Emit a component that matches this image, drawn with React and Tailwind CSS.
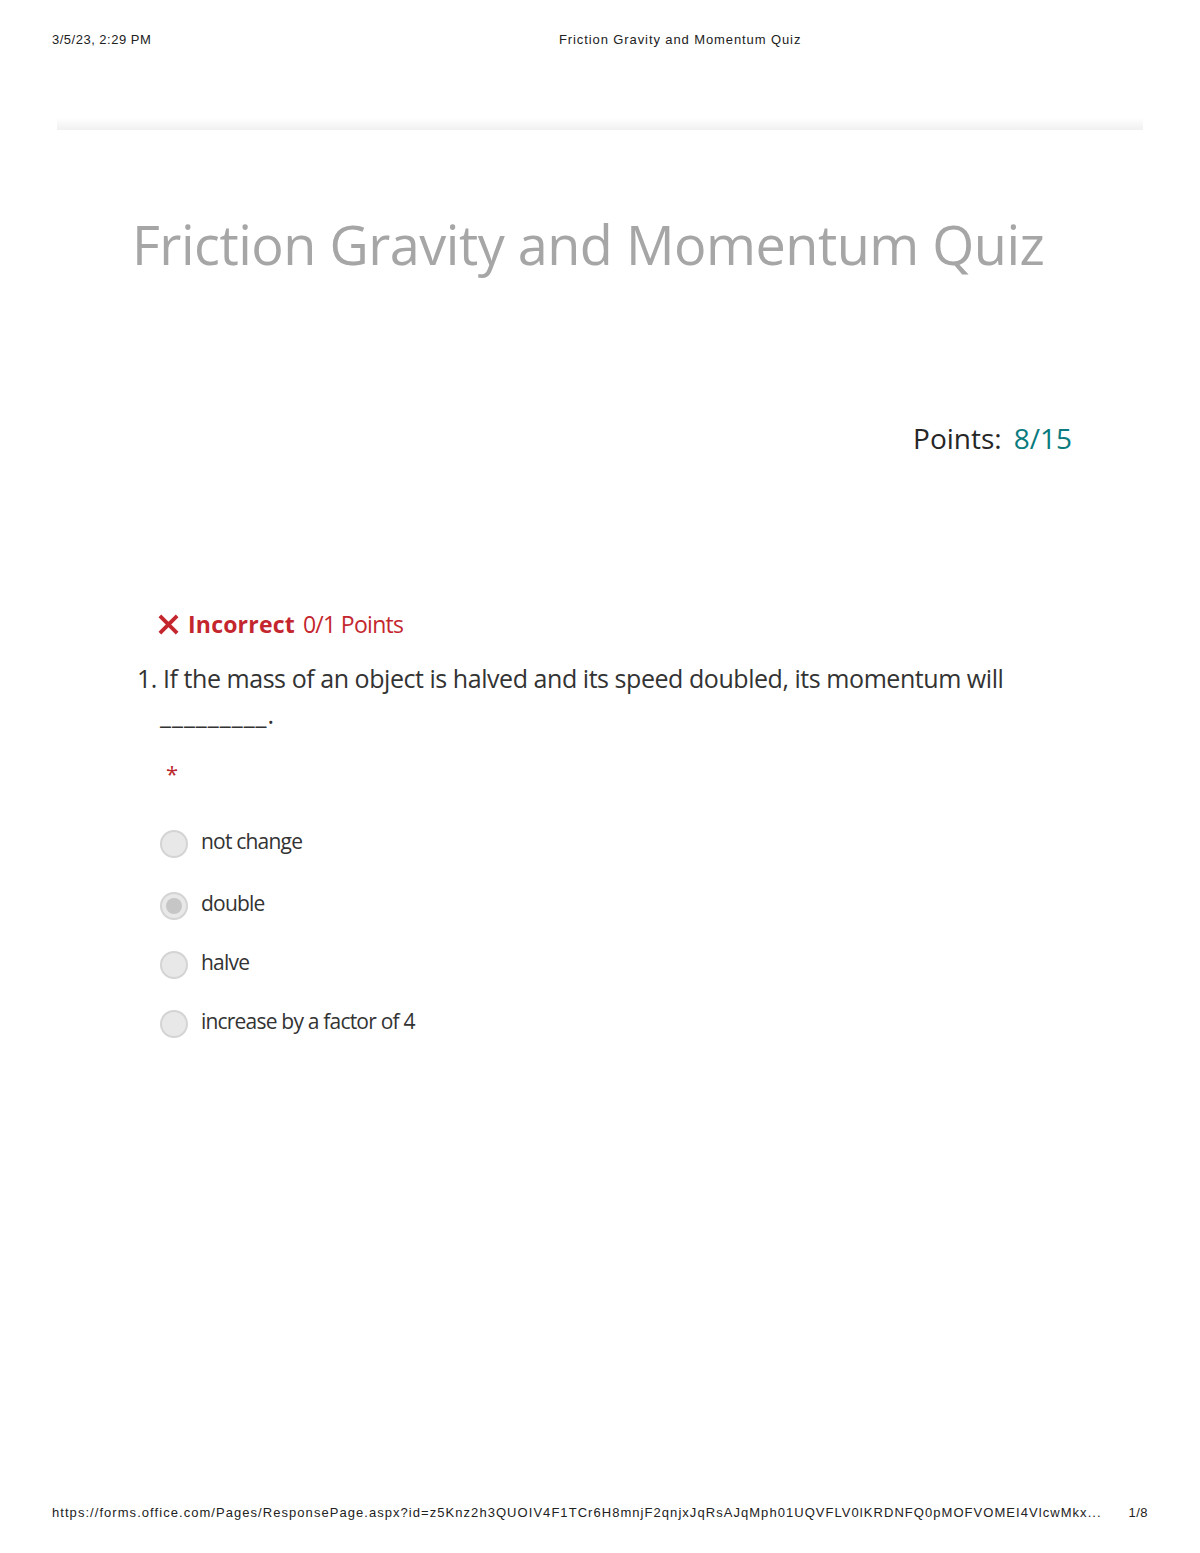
import React from 'react';

const options = [
  { label: 'not change', selected: false },
  { label: 'double', selected: true },
  { label: 'halve', selected: false },
  { label: 'increase by a factor of 4', selected: false },
];

const Radio = ({ selected }) => (
  <span className="w-[28px] h-[28px] rounded-full border-2 border-[#d4d4d4] bg-[#e8e8e8] flex items-center justify-center shrink-0">
    {selected && <span className="w-[16px] h-[16px] rounded-full bg-[#c6c6c6]" />}
  </span>
);

const App = () => {
  return (
    <div className="w-[1200px] h-[1553px] bg-white flex flex-col text-[#333] font-['Open_Sans',sans-serif]">
      <div className="flex items-center h-[80px] px-[52px] text-[13px] text-[#222] font-['Liberation_Sans',sans-serif] tracking-[0.5px]">
        <span className="w-[507px]">3/5/23, 2:29 PM</span>
        <span className="tracking-[0.9px]">Friction Gravity and Momentum Quiz</span>
      </div>

      <div className="mx-[57px] mt-[38px] h-[12px] bg-gradient-to-b from-white to-[#f0f0f0]" />

      <div className="flex-1 flex flex-col">
        <h1 className="pl-[132px] mt-[78px] text-[54px] leading-[72px] text-[#a6a6a6] tracking-[-0.5px]">
          Friction Gravity and Momentum Quiz
        </h1>

        <div className="flex justify-end pr-[128px] mt-[138px] text-[28px] leading-[40px]">
          <span className="text-[#262626]">Points:</span>
          <span className="ml-[12px] text-[#0a7b7e]">8/15</span>
        </div>

        <div className="pl-[157px] mt-[150px] flex items-center gap-[8px]">
          <svg width="23" height="23" viewBox="0 0 24 24" className="shrink-0">
            <path d="M3 3 L21 21 M21 3 L3 21" stroke="#c4262e" strokeWidth="4" strokeLinecap="butt" />
          </svg>
          <span className="text-[23px] leading-[32px] font-bold text-[#c4262e] tracking-[0.2px]">Incorrect</span>
          <span className="text-[23px] leading-[32px] text-[#c4262e] tracking-[-0.7px]">0/1 Points</span>
        </div>

        <div className="pl-[137px] pr-[150px] mt-[20px] text-[25px] leading-[36px] text-[#333] tracking-[-0.45px]">
          <div>1. If the mass of an object is halved and its speed doubled, its momentum will</div>
          <div className="pl-[23px] tracking-[1px]">_________.</div>
        </div>

        <div className="pl-[166px] mt-[25px] text-[22px] text-[#b8262c]">*</div>

        <div className="pl-[160px] mt-[40px] flex flex-col gap-[31px]">
          {options.map((o, i) => (
            <div key={o.label} className={`flex items-center gap-[13px] h-[28px] ${i === 1 ? 'mt-[3px]' : ''}`}>
              <Radio selected={o.selected} />
              <span className="text-[21px] text-[#333] tracking-[-0.8px] -mt-[4px]">{o.label}</span>
            </div>
          ))}
        </div>
      </div>

      <div className="flex items-center h-[80px] px-[52px] text-[13px] text-[#222] font-['Liberation_Sans',sans-serif] tracking-[1.05px]">
        <span className="flex-1">https://forms.office.com/Pages/ResponsePage.aspx?id=z5Knz2h3QUOIV4F1TCr6H8mnjF2qnjxJqRsAJqMph01UQVFLV0lKRDNFQ0pMOFVOMEI4VlcwMkx...</span>
        <span className="tracking-[0.5px]">1/8</span>
      </div>
    </div>
  );
};

export default App;
